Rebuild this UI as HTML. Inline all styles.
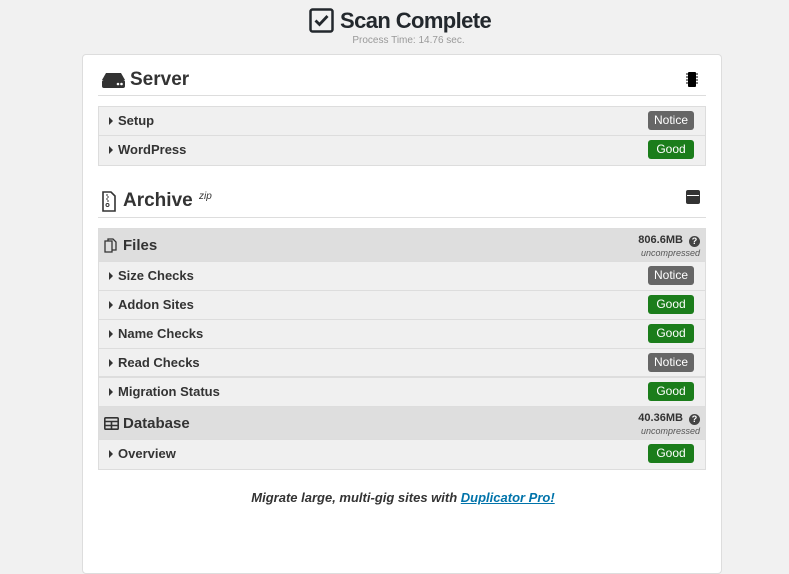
<!DOCTYPE html>
<html><head><meta charset="utf-8"><style>
*{margin:0;padding:0;box-sizing:border-box}
body{width:789px;height:553px;background:#f1f1f1;font-family:"Liberation Sans",sans-serif;color:#333;position:relative;overflow:hidden}
.a{position:absolute}
.card{left:82px;top:54px;width:640px;height:520px;background:#fff;border:1px solid #ddd;border-radius:4px}
h1{position:absolute;left:340px;top:8px;font-size:22px;font-weight:bold;color:#23282d;letter-spacing:-0.6px}
.sub{left:14px;width:789px;text-align:center;top:35px;font-size:10px;color:#999}
.h2{font-size:19px;font-weight:bold;color:#333}
.hr{height:1px;background:#ddd;left:98px;width:608px}
.tbl{left:98px;width:608px;border:1px solid #ddd;background:#f0f0f0}
.row{position:relative;height:29px;border-bottom:1px solid #ddd;font-size:13px;font-weight:bold;line-height:28px;padding-left:19px}
.row:last-child{border-bottom:none}
.row:before{content:"";position:absolute;left:10px;top:10px;border-left:4px solid #333;border-top:4px solid transparent;border-bottom:4px solid transparent}
.badge{position:absolute;right:11px;top:4px;width:46px;height:19px;border-radius:3px;color:#fff;font-weight:normal;font-size:12px;line-height:19px;text-align:center}
.n{background:#666}.g{background:#1b7d1b}
.sec{position:relative;height:33px;background:#dedede;font-size:15px;font-weight:bold;line-height:33px;padding-left:24px;border-bottom:1px solid #ddd}
.size{position:absolute;right:5px;top:5px;text-align:right;font-size:11px;line-height:12px;font-weight:bold}
.size i{font-weight:normal;font-size:9px;color:#555;display:block}
.q{display:inline-block;width:11px;height:11px;border-radius:50%;background:#444;color:#fff;font-size:9px;line-height:11px;text-align:center;margin-left:3px;vertical-align:-1px}
</style></head><body>
<svg class="a" style="left:309px;top:8px" width="25" height="25" viewBox="0 0 25 25"><rect x="1.5" y="1.5" width="22" height="22" rx="2" fill="none" stroke="#23282d" stroke-width="2.5"/><path d="M6.5 12.5l4 4 8-8.5" fill="none" stroke="#23282d" stroke-width="2.8"/></svg>
<h1>Scan Complete</h1>
<div class="a sub">Process Time: 14.76 sec.</div>
<div class="a card"></div>

<svg class="a" style="left:102px;top:72px" width="23" height="16" viewBox="0 0 23 16"><path d="M4 1h15l4 7H0z" fill="#333"/><rect x="0" y="8" width="23" height="8" rx="2" fill="#333"/><circle cx="16" cy="12" r="1.3" fill="#fff"/><circle cx="19.5" cy="12" r="1.3" fill="#fff"/></svg>
<div class="a h2" style="left:130px;top:69px">Server</div>
<svg class="a" style="left:686px;top:72px" width="12" height="15" viewBox="0 0 12 15"><rect x="2" y="0" width="8" height="15" rx="1" fill="#000"/><path d="M0 2h2M0 5h2M0 8h2M0 11h2M10 2h2M10 5h2M10 8h2M10 11h2" stroke="#000"/></svg>
<div class="a hr" style="top:95px"></div>
<div class="a tbl" style="top:106px">
<div class="row">Setup<span class="badge n">Notice</span></div>
<div class="row">WordPress<span class="badge g">Good</span></div>
</div>

<svg class="a" style="left:102px;top:191px" width="14" height="21" viewBox="0 0 14 21"><path d="M1 1h8l4 4v15H1z" fill="none" stroke="#333" stroke-width="1.6"/><path d="M5 3v2M6 5v2M5 7v2M6 9v2" stroke="#333"/><circle cx="5.5" cy="14" r="1.5" fill="none" stroke="#333"/></svg>
<div class="a h2" style="left:123px;top:190px">Archive</div>
<div class="a" style="left:199px;top:191px;font-size:10px;font-style:italic">zip</div>
<svg class="a" style="left:686px;top:190px" width="14" height="14" viewBox="0 0 14 14"><rect width="14" height="14" rx="2" fill="#333"/><rect x="1" y="5" width="12" height="1" fill="#fff"/></svg>
<div class="a hr" style="top:217px"></div>
<div class="a tbl" style="top:228px">
<div class="sec"><svg class="a" style="left:5px;top:9px" width="13" height="15" viewBox="0 0 13 15"><path d="M1 3h7v11H1z M4 3V1h5l3 3v8H8" fill="none" stroke="#333" stroke-width="1.3"/></svg>Files<div class="size">806.6MB <span class="q">?</span><i>uncompressed</i></div></div>
<div class="row">Size Checks<span class="badge n">Notice</span></div>
<div class="row">Addon Sites<span class="badge g">Good</span></div>
<div class="row">Name Checks<span class="badge g">Good</span></div>
<div class="row" style="border-bottom:2px solid #ddd">Read Checks<span class="badge n">Notice</span></div>
<div class="row">Migration Status<span class="badge g">Good</span></div>
<div class="sec"><svg class="a" style="left:5px;top:10px" width="15" height="13" viewBox="0 0 15 13"><rect x="0.8" y="0.8" width="13.4" height="11.4" rx="1" fill="none" stroke="#333" stroke-width="1.6"/><path d="M0 4.5h15M7.5 4v9M0 8.5h15" stroke="#333" stroke-width="1.6"/></svg>Database<div class="size">40.36MB <span class="q">?</span><i>uncompressed</i></div></div>
<div class="row">Overview<span class="badge g">Good</span></div>
</div>

<div class="a" style="left:0;width:806px;text-align:center;top:490px;font-size:13px;font-weight:bold;font-style:italic">Migrate large, multi-gig sites with <span style="color:#0073aa;text-decoration:underline">Duplicator Pro!</span></div>
</body></html>
